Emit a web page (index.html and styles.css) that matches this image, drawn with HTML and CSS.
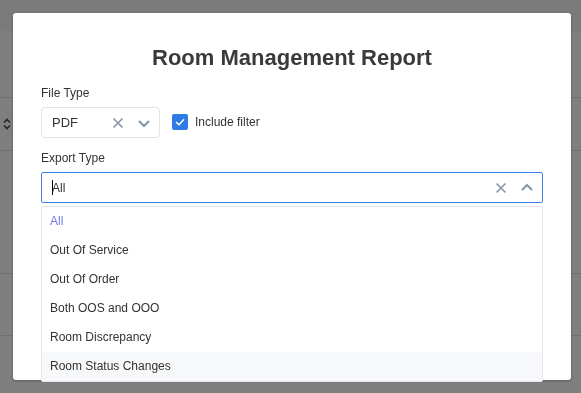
FILE: index.html
```html
<!DOCTYPE html>
<html lang="en">
  <head>
    <meta charset="UTF-8" />
    <meta name="viewport" content="width=device-width, initial-scale=1.0" />
    <title>Room Management Report</title>
    <link rel="stylesheet" href="styles.css">
  </head>
  <body>
    <!-- page behind the modal -->
    <div class="page">
      <div class="page-header"></div>
      <div class="page-row row-a"></div>
      <div class="page-row row-b">
        <span class="sort">
          <svg width="8" height="12" viewBox="0 0 8 12">
            <path d="M1 4.5 L4 1.5 L7 4.5" fill="none" stroke="#4a4f55" stroke-width="1.6" />
            <path d="M1 7.5 L4 10.5 L7 7.5" fill="none" stroke="#4a4f55" stroke-width="1.6" />
          </svg>
        </span>
      </div>
      <div class="page-row row-c"></div>
      <div class="page-row row-d"></div>
    </div>

    <div class="backdrop">
      <div class="modal">
        <h1 class="modal-title">Room Management Report</h1>

        <div class="field">
          <label class="field-label">File Type</label>
          <div class="field-line">
            <div class="select select-small">
              <span class="select-value">PDF</span>
              <span class="select-icons">
                <svg class="icon" width="12" height="12" viewBox="0 0 12 12">
                  <path d="M1.5 1.5 L10.5 10.5 M10.5 1.5 L1.5 10.5" stroke="#8a97a8" stroke-width="1.7" />
                </svg>
                <svg class="icon" width="14" height="12" viewBox="0 0 14 12">
                  <path d="M2 4 L7 9 L12 4" fill="none" stroke="#8a97a8" stroke-width="2.2" />
                </svg>
              </span>
            </div>
            <label class="check">
              <span class="check-box">
                <svg width="10" height="8" viewBox="0 0 10 8">
                  <path d="M1 4 L4 6.8 L9 1.2" fill="none" stroke="#fff" stroke-width="1.4" />
                </svg>
              </span>
              <span class="check-text">Include filter</span>
            </label>
          </div>
        </div>

        <div class="field">
          <label class="field-label">Export Type</label>
          <div class="select select-wide focused">
            <span class="select-value"><span class="caret"></span>All</span>
            <span class="select-icons">
              <svg class="icon" width="12" height="12" viewBox="0 0 12 12">
                <path d="M1.5 1.5 L10.5 10.5 M10.5 1.5 L1.5 10.5" stroke="#8a97a8" stroke-width="1.7" />
              </svg>
              <svg class="icon" width="14" height="12" viewBox="0 0 14 12">
                <path d="M2 8 L7 3 L12 8" fill="none" stroke="#8a97a8" stroke-width="2.2" />
              </svg>
            </span>
          </div>
          <ul class="menu">
            <li class="menu-item selected">All</li>
            <li class="menu-item">Out Of Service</li>
            <li class="menu-item">Out Of Order</li>
            <li class="menu-item">Both OOS and OOO</li>
            <li class="menu-item">Room Discrepancy</li>
            <li class="menu-item hover">Room Status Changes</li>
          </ul>
        </div>
      </div>
    </div>
  </body>
</html>
```

FILE: styles.css
```css
* {
  margin: 0;
  padding: 0;
  box-sizing: border-box;
}

body {
  font-family: "Liberation Sans", Arial, sans-serif;
  color: #333;
  background-color: #fff;
  overflow: hidden;
}

/* page behind the overlay */
.page {
  height: 393px;
}

.page-header {
  height: 31px;
  background-color: #f6f6f6;
}

.page-row {
  border-bottom: 1px solid #e2e2e2;
}

.row-a {
  height: 67px;
}

.row-b {
  height: 53px;
  display: flex;
  align-items: center;
  padding-left: 3px;
}

.row-c {
  height: 123px;
}

.row-d {
  height: 62px;
}

.sort {
  display: flex;
}

.backdrop {
  position: fixed;
  inset: 0;
  background-color: rgba(0, 0, 0, 0.5);
  padding: 13px 10px 0 13px;
}

.modal {
  width: 558px;
  height: 367px;
  background-color: #fff;
  border-radius: 3px;
  box-shadow: 0 1px 3px rgba(0, 0, 0, 0.3);
  padding: 32px 28px 0 28px;
}

.modal-title {
  font-size: 22px;
  line-height: 26px;
  font-weight: bold;
  text-align: center;
  color: #3a3a3a;
  margin-bottom: 14px;
}

.field {
  margin-bottom: 12px;
}

.field-label {
  display: block;
  font-size: 12px;
  line-height: 16px;
  margin-bottom: 6px;
}

.field-line {
  display: flex;
  align-items: center;
  gap: 12px;
}

.select {
  display: flex;
  align-items: center;
  justify-content: space-between;
  height: 31px;
  border: 1px solid #e3e3e3;
  border-radius: 4px;
  padding: 0 8px 0 10px;
  font-size: 13px;
}

.select-small {
  width: 119px;
}

.select-wide {
  width: 502px;
  border-radius: 2px;
}

.focused {
  border-color: #3b82e8;
}

.select-value {
  display: flex;
  align-items: center;
}

.select-wide .select-value {
  font-size: 12px;
}

.caret {
  display: inline-block;
  width: 1px;
  height: 15px;
  background-color: #000;
  margin-right: -1px;
  margin-top: -1px;
}

.select-icons {
  display: flex;
  align-items: center;
  gap: 13px;
}

.icon {
  display: block;
}

.check {
  display: flex;
  align-items: center;
  gap: 7px;
  font-size: 12px;
  margin-top: -2px;
}

.check-box {
  width: 16px;
  height: 16px;
  border-radius: 2px;
  background-color: #2f7be6;
  display: flex;
  align-items: center;
  justify-content: center;
}

.menu {
  list-style: none;
  margin-top: 3px;
  width: 502px;
  border: 1px solid #e4e5ec;
  border-radius: 2px;
  background-color: #fff;
}

.menu-item {
  height: 29px;
  line-height: 29px;
  padding-left: 8px;
  font-size: 12px;
  color: #333;
}

.menu-item.selected {
  color: #6f7ce8;
}

.menu-item.hover {
  background-color: #f7f8fa;
}
```
